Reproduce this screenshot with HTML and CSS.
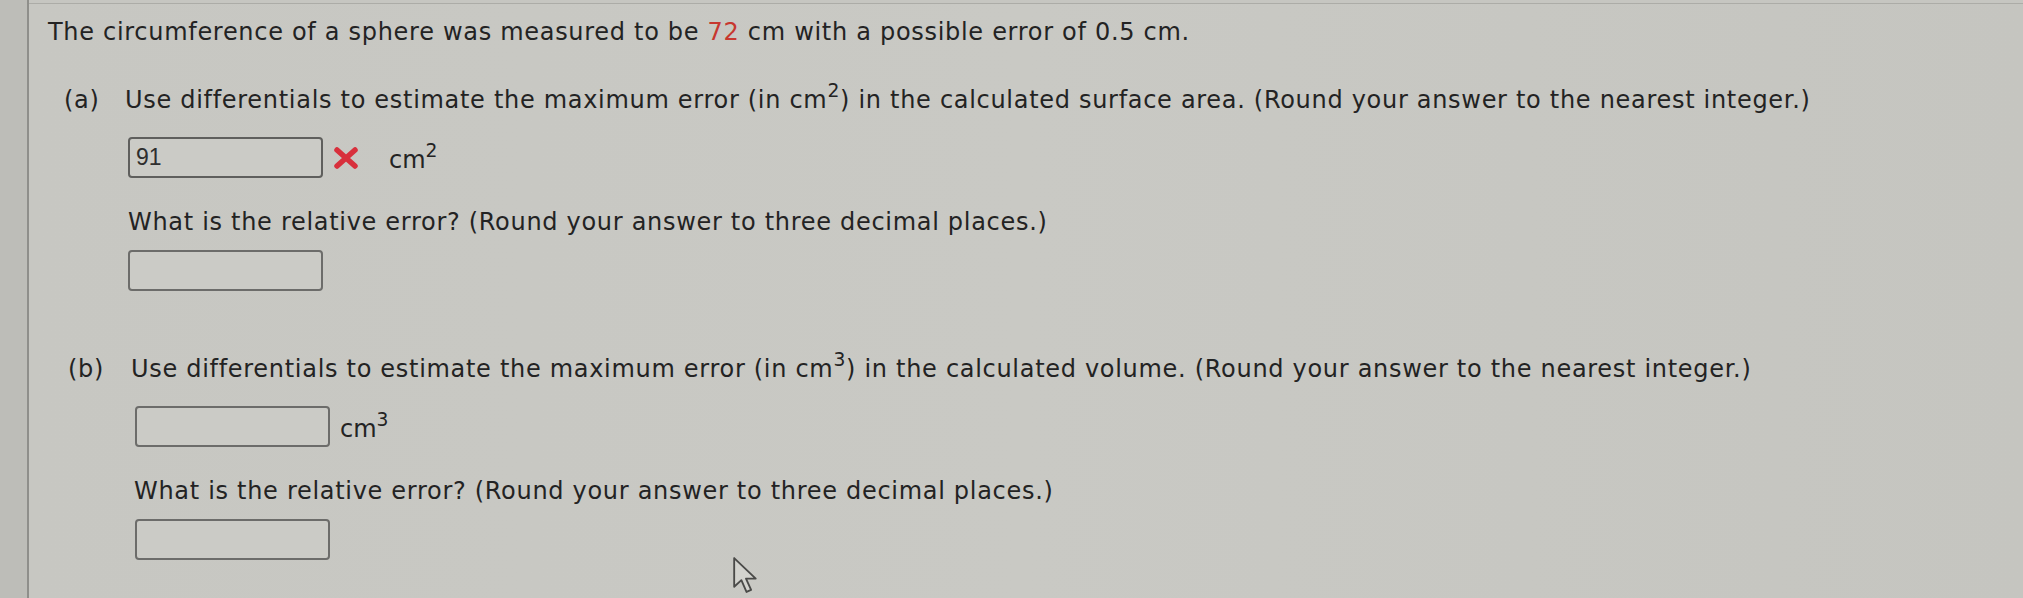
FILE: index.html
```html
<!DOCTYPE html>
<html lang="en">
<head>
<meta charset="utf-8">
<title>Sphere differentials</title>
<link rel="stylesheet" href="styles.css">
</head>
<body>
<div class="gutter"></div>
<main class="frame">
  <p class="intro">The circumference of a sphere was measured to be <span class="given">72</span> cm with a possible error of 0.5 cm.</p>

  <section class="part part-a">
    <div class="label">(a)</div>
    <div class="body">
      <p class="prompt">Use differentials to estimate the maximum error (in cm<sup>2</sup>) in the calculated surface area. (Round your answer to the nearest integer.)</p>
      <div class="answer-row">
        <div class="field field-filled">91</div>
        <svg class="wrong" viewBox="0 0 26 24" width="26" height="24" aria-label="incorrect">
          <path d="M4 4 L22 20 M22 4 L4 20" stroke="#d8303c" stroke-width="5.5" stroke-linecap="round"/>
        </svg>
        <span class="unit unit-spaced">cm<sup>2</sup></span>
      </div>
      <p class="prompt prompt-sub">What is the relative error? (Round your answer to three decimal places.)</p>
      <div class="answer-row">
        <div class="field"></div>
      </div>
    </div>
  </section>

  <section class="part part-b">
    <div class="label">(b)</div>
    <div class="body">
      <p class="prompt">Use differentials to estimate the maximum error (in cm<sup>3</sup>) in the calculated volume. (Round your answer to the nearest integer.)</p>
      <div class="answer-row">
        <div class="field"></div>
        <span class="unit">cm<sup>3</sup></span>
      </div>
      <p class="prompt prompt-sub">What is the relative error? (Round your answer to three decimal places.)</p>
      <div class="answer-row">
        <div class="field field-shift"></div>
      </div>
    </div>
  </section>

  <svg class="cursor" viewBox="0 0 30 38" width="31" height="39" aria-hidden="true">
    <path d="M3 2 L3 30 L10 23.5 L15 35 L19.5 33 L14.5 22 L24 22 Z" fill="#d3d3ce" stroke="#4a4a48" stroke-width="1.8" stroke-linejoin="round"/>
  </svg>
</main>
</body>
</html>
```

FILE: styles.css
```css
html, body {
  margin: 0;
  padding: 0;
}

body {
  background: #c6c6c1;
  font-family: "DejaVu Sans", Verdana, sans-serif;
  font-size: 24px;
  letter-spacing: 0.7px;
  color: #232323;
  height: 598px;
  overflow: hidden;
  display: flex;
  position: relative;
}

.gutter {
  width: 27px;
  flex: none;
  background: #bdbdb8;
  border-right: 2px solid #8f8f8b;
}

.frame {
  flex: 1;
  position: relative;
  margin-top: 3px;
  border-top: 1px solid #acaca7;
  padding: 13px 0 0 19px;
  background: linear-gradient(90deg, #c7c7c2 0%, #c9c9c4 50%, #c5c5c0 100%);
}

p {
  margin: 0;
  line-height: 30px;
}

sup {
  font-size: 0.78em;
  line-height: 0;
  vertical-align: 0.6em;
}

.given {
  color: #c7372f;
}

.part {
  display: flex;
  margin-left: 16px;
}

.part-a {
  margin-top: 38px;
}

.part-b {
  margin-top: 63px;
  margin-left: 20px;
}

.part-b .label {
  width: 63px;
}

.label {
  width: 61px;
  flex: none;
  line-height: 30px;
}

.body {
  display: flex;
  flex-direction: column;
}

.answer-row {
  display: flex;
  align-items: center;
  margin-top: 22px;
  padding-left: 3px;
}

.prompt-sub {
  padding-left: 3px;
}

.answer-row + .prompt-sub {
  margin-top: 29px;
}

.prompt-sub + .answer-row {
  margin-top: 13px;
}

.field {
  width: 191px;
  height: 37px;
  border: 2px solid #6c6c6a;
  border-radius: 4px;
  background: #cbcbc6;
  box-sizing: content-box;
  font-family: "Liberation Sans", Arial, sans-serif;
  font-size: 23px;
  letter-spacing: 0;
  line-height: 37px;
  text-indent: 6px;
  color: #2e2e2e;
}

.part-b .answer-row .field {
  margin-left: 1px;
}

.field-filled {
  border-color: #5f5f5d;
}

.part-b .field-shift {
  margin-left: 4px;
}

.wrong {
  margin-left: 10px;
  flex: none;
}

.unit {
  margin-left: 10px;
  font-size: 24px;
  letter-spacing: 0;
  padding-top: 4px;
}

.unit-spaced {
  margin-left: 30px;
}

.cursor {
  position: absolute;
  left: 702px;
  top: 552px;
}
```
